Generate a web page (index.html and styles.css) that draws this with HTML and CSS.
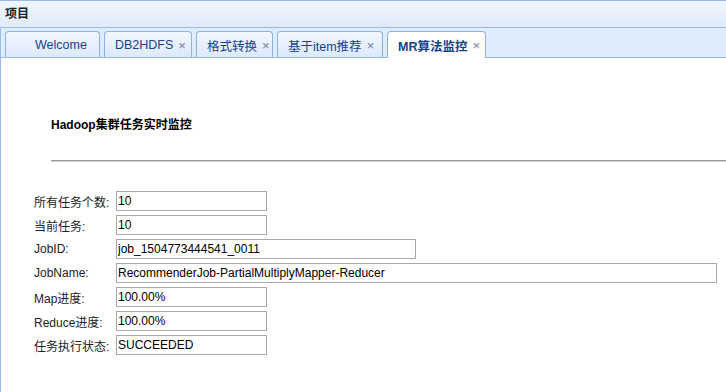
FILE: index.html
```html
<!DOCTYPE html>
<html>
<head>
<meta charset="utf-8">
<link rel="stylesheet" href="styles.css">
</head>
<body>
<div class="panel">
  <div class="panel-header">项目</div>
  <div class="tabstrip">
    <div class="tab tab-welcome"><span class="tab-text">Welcome</span></div>
    <div class="tab tab-db"><span class="tab-text">DB2HDFS</span><span class="close">×</span></div>
    <div class="tab tab-fmt"><span class="tab-text">格式转换</span><span class="close">×</span></div>
    <div class="tab tab-item"><span class="tab-text">基于item推荐</span><span class="close">×</span></div>
    <div class="tab tab-mr active"><span class="tab-text">MR算法监控</span><span class="close">×</span></div>
  </div>
  <div class="content">
    <div class="title">Hadoop集群任务实时监控</div>
    <hr class="sep">
    <div class="form">
      <div class="row"><span class="label">所有任务个数:</span><input class="field w150" value="10"></div>
      <div class="row"><span class="label">当前任务:</span><input class="field w150" value="10"></div>
      <div class="row"><span class="label">JobID:</span><input class="field w300" value="job_1504773444541_0011"></div>
      <div class="row"><span class="label">JobName:</span><input class="field w600" value="RecommenderJob-PartialMultiplyMapper-Reducer"></div>
      <div class="row"><span class="label">Map进度:</span><input class="field w150" value="100.00%"></div>
      <div class="row"><span class="label">Reduce进度:</span><input class="field w150" value="100.00%"></div>
      <div class="row"><span class="label">任务执行状态:</span><input class="field w150" value="SUCCEEDED"></div>
    </div>
  </div>
</div>
</body>
</html>
```

FILE: styles.css
```css
html, body {
  margin: 0;
  padding: 0;
  background: #ffffff;
}
body {
  width: 726px;
  height: 392px;
  overflow: hidden;
  font-family: "Liberation Sans", "Noto Sans CJK SC", sans-serif;
  font-size: 12px;
}
.panel {
  display: flex;
  flex-direction: column;
  height: 392px;
  border-left: 1px solid #99bbe8;
  box-sizing: border-box;
}
.panel-header {
  height: 26px;
  border-top: 1px solid #99bbe8;
  border-bottom: 1px solid #99bbe8;
  background: linear-gradient(#f1f6fe, #e0eafb);
  font-weight: bold;
  color: #222;
  line-height: 26px;
  padding-left: 5px;
  font-size: 12px;
  margin-left: -1px;
}
.tabstrip {
  height: 30px;
  background: #deecfd;
  border-bottom: 1px solid #99bbe8;
  display: flex;
  align-items: flex-end;
  gap: 4px;
  padding-left: 4px;
  box-sizing: border-box;
}
.tab {
  flex-shrink: 0;
  white-space: nowrap;
  height: 26px;
  box-sizing: border-box;
  border: 1px solid #8db2e3;
  border-bottom: none;
  border-radius: 4px 4px 0 0;
  background: linear-gradient(#f3f7fe, #dce9fb);
  display: flex;
  align-items: center;
  color: #15428b;
  font-size: 12.5px;
  padding-top: 1px;
}
.tab-welcome { width: 95px; padding-left: 29px; }
.tab-db { width: 88px; padding-left: 10px; }
.tab-fmt { width: 77px; padding-left: 10px; }
.tab-item { width: 106px; padding-left: 10px; }
.tab-mr { width: 99px; padding-left: 10px; }
.tab.active {
  background: #ffffff;
  height: 27px;
  margin-bottom: -1px;
  font-weight: bold;
  color: #15428b;
}
.close {
  color: #6d7f9c;
  font-size: 13px;
  margin-left: 5px;
  font-weight: normal;
}
.content {
  flex: 1;
  background: #fff;
}
.title {
  margin: 59px 0 0 50px;
  font-weight: bold;
  font-size: 12px;
  color: #000;
  line-height: 16px;
}
.sep {
  margin: 27px 0 0 50px;
  border: none;
  border-top: 1px solid #9a9a9a;
  border-bottom: 1px solid #d0d0d0;
  height: 0;
}
.form {
  margin: 29px 0 0 33px;
  display: flex;
  flex-direction: column;
  gap: 4px;
}
.row {
  display: flex;
  align-items: center;
  height: 20px;
}
.label {
  width: 82px;
  color: #222;
  font-size: 12px;
}
.field {
  height: 20px;
  box-sizing: border-box;
  border: 1px solid #a9a9a9;
  padding: 0 1px;
  margin: 0;
  font-family: "Liberation Sans", sans-serif;
  font-size: 12px;
  color: #000;
  outline: none;
}
.w150 { width: 151px; }
.w300 { width: 300px; }
.w600 { width: 601px; }
```
